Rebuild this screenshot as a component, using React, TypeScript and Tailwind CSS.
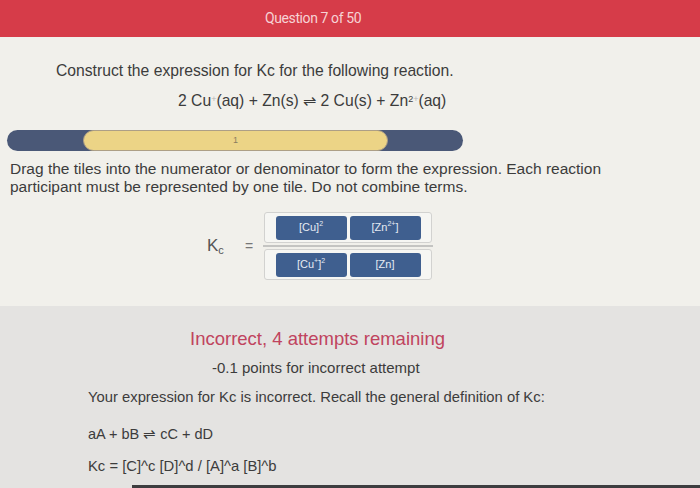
import React from "react";

const body = { fontFamily: '"Liberation Sans", Arial, sans-serif' };

function Tile({ children }: { children: React.ReactNode }) {
  return (
    <div className="flex h-[24px] w-[71px] items-center justify-center rounded-[3px] bg-[#3f5f8f] text-[11px] text-[#e6ebf3]">
      {children}
    </div>
  );
}

function TileRow({ children }: { children: React.ReactNode }) {
  return (
    <div className="flex h-[31px] w-[168px] items-center justify-center gap-[3px] rounded-[3px] border border-[#d2d2d0] bg-[#f6f6f3]">
      {children}
    </div>
  );
}

export default function App() {
  return (
    <div className="relative flex h-[488px] w-[700px] flex-col overflow-hidden bg-[#f1f0eb] text-[#3c3c3c]" style={body}>
      <header className="flex h-[37px] shrink-0 items-center bg-[#d63c49]">
        <span
          className="ml-[265px] text-[14px] tracking-[-0.4px] text-[#f6d3d5]"
          style={{ fontFamily: '"Roboto", "Open Sans", sans-serif' }}
        >
          Question 7 of 50
        </span>
      </header>

      <section className="flex flex-col">
        <p className="ml-[56px] mt-[24px] text-[15.7px] leading-[20px]">
          Construct the expression for Kc for the following reaction.
        </p>
        <p className="ml-[178px] mt-[10px] text-[15.7px] leading-[20px]">
          2 Cu<sup className="text-[9px] text-[#b5b5b5]">+</sup>(aq) + Zn(s) ⇌ 2 Cu(s) + Zn
          <sup className="text-[9px]">2</sup>
          <sup className="text-[9px] text-[#b5b5b5]">+</sup>(aq)
        </p>

        <div className="ml-[7px] mt-[19px] flex h-[21px] w-[456px] items-center rounded-full bg-[#4a5877]">
          <div className="ml-[76px] flex h-[21px] w-[305px] items-center justify-center rounded-full border border-[#ad9f86] bg-[#ecd486] text-[9px] text-[#8a7d60]">
            1
          </div>
        </div>

        <p className="ml-[10px] mt-[9px] w-[640px] text-[15.5px] leading-[18px]">
          Drag the tiles into the numerator or denominator to form the expression. Each reaction
          participant must be represented by one tile. Do not combine terms.
        </p>

        <div className="mt-[16px] flex items-center">
          <span className="ml-[207px] w-[38px] text-[17px] text-[#555]">
            K<sub className="text-[11px]">c</sub>
          </span>
          <span className="w-[18px] text-[14px] text-[#777]">=</span>
          <div className="flex flex-col items-center">
            <TileRow>
              <Tile>
                [Cu]<sup className="text-[7px]">2</sup>
              </Tile>
              <Tile>
                [Zn<sup className="text-[7px]">2+</sup>]
              </Tile>
            </TileRow>
            <div className="my-[2px] h-[2px] w-[170px] bg-[#c4c4c2]" />
            <TileRow>
              <Tile>
                [Cu<sup className="text-[7px]">+</sup>]<sup className="text-[7px]">2</sup>
              </Tile>
              <Tile>[Zn]</Tile>
            </TileRow>
          </div>
        </div>
      </section>

      <section className="mt-[26px] flex flex-1 flex-col bg-[#e4e3e1]">
        <p className="ml-[190px] mt-[22px] text-[18.5px] leading-[22px] text-[#c0445e]">
          Incorrect, 4 attempts remaining
        </p>
        <p className="ml-[212px] mt-[9px] text-[15px] leading-[18px]">
          -0.1 points for incorrect attempt
        </p>
        <p className="ml-[88px] mt-[11px] text-[14.8px] leading-[18px]">
          Your expression for Kc is incorrect. Recall the general definition of Kc:
        </p>
        <p className="ml-[88px] mt-[19px] text-[14.5px] leading-[18px]">aA + bB ⇌ cC + dD</p>
        <p className="ml-[88px] mt-[14px] text-[14.8px] leading-[18px]">Kc = [C]^c [D]^d / [A]^a [B]^b</p>
        <div className="mt-auto ml-[132px] h-[3px] bg-[#3d3d3f]" />
      </section>
    </div>
  );
}
